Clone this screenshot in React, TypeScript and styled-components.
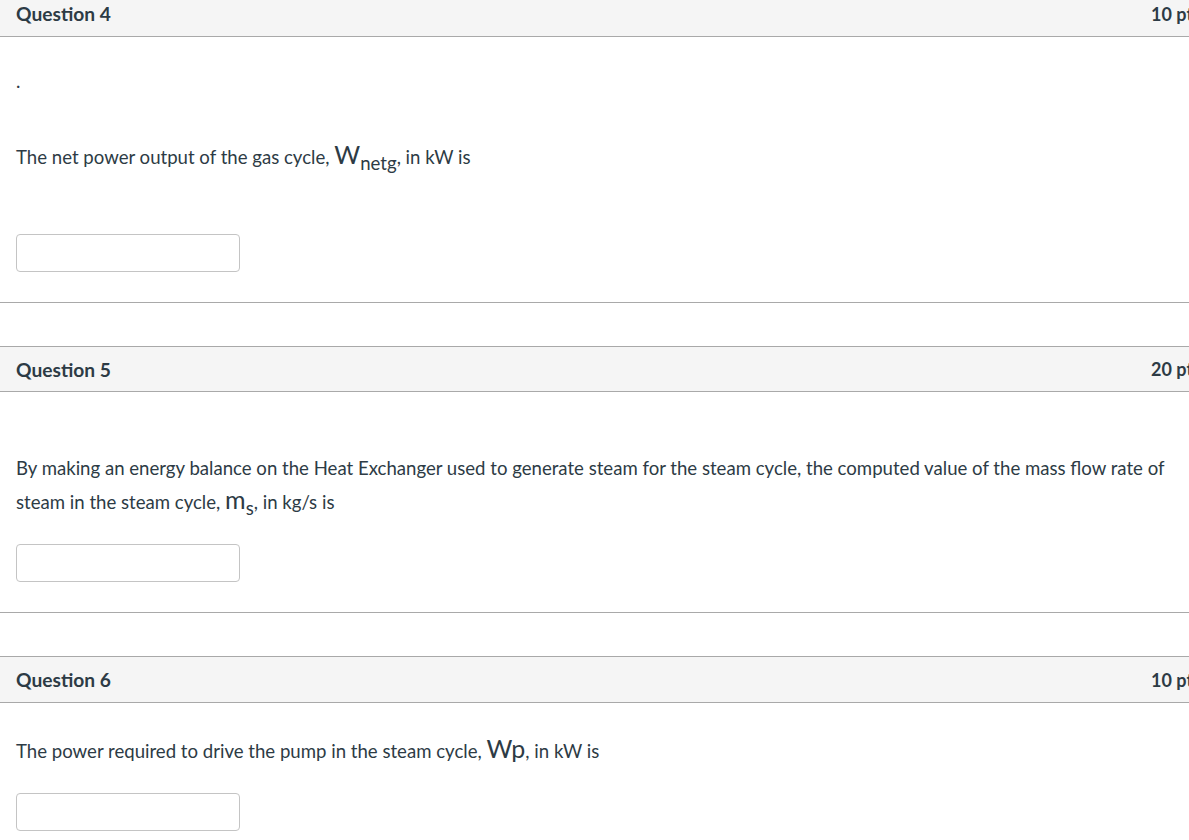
import React from "react";
import styled, { createGlobalStyle } from "styled-components";

const GlobalStyle = createGlobalStyle`
  html, body {
    margin: 0;
    padding: 0;
    background: #ffffff;
    overflow: hidden;
  }
  body {
    font-family: Lato, "Noto Sans", "Liberation Sans", sans-serif;
    color: #2d3b45;
  }
`;

const Page = styled.div`
  width: 1217px;
  margin-top: -10px;
  display: flex;
  flex-direction: column;
  gap: 43px;
`;

const Question = styled.section`
  border-bottom: 1px solid #a9a9a9;
`;

const Header = styled.header<{ $h?: number }>`
  height: ${(p) => p.$h ?? 45}px;
  padding: 0 16px;
  display: flex;
  align-items: center;
  justify-content: space-between;
  background: #f5f5f5;
  border-top: 1px solid #a9a9a9;
  border-bottom: 1px solid #a9a9a9;
  font-weight: 700;
  font-size: 19.2px;
`;

const Title = styled.span``;

const Points = styled.span`
  white-space: nowrap;
  font-size: 18px;
`;

const Body = styled.div`
  padding: 31px 16px 30px;
  display: flex;
  flex-direction: column;
`;

const Para = styled.p<{ $before?: number; $lh?: number }>`
  margin: ${(p) => p.$before ?? 0}px 0 0;
  font-size: 18.6px;
  line-height: ${(p) => p.$lh ?? 34}px;
`;

const MathBig = styled.span`
  font-size: 25px;
  line-height: 0;
`;

const Sub = styled.sub`
  font-size: 18.6px;
  vertical-align: -6px;
  line-height: 0;
`;

const Answer = styled.input`
  box-sizing: border-box;
  width: 224px;
  height: 38px;
  margin-top: 25px;
  border: 1px solid #c4c4c4;
  border-radius: 4px;
  background: #fff;
  padding: 0 8px;
  font-family: inherit;
  font-size: 16px;
`;

export default function App() {
  return (
    <>
      <GlobalStyle />
      <Page>
        <Question>
          <Header>
            <Title>Question 4</Title>
            <Points>10 pts</Points>
          </Header>
          <Body>
            <Para $lh={26}>.</Para>
            <Para $before={46}>
              The net power output of the gas cycle, <MathBig>W</MathBig>
              <Sub>netg</Sub>, in kW is
            </Para>
            <Para $lh={35}>&nbsp;</Para>
            <Answer type="text" />
          </Body>
        </Question>

        <Question>
          <Header $h={44}>
            <Title>Question 5</Title>
            <Points>20 pts</Points>
          </Header>
          <Body>
            <Para $before={28}>
              By making an energy balance on the Heat Exchanger used to generate steam for the steam cycle, the computed value of the mass flow rate of
              steam in the steam cycle, <MathBig>m</MathBig>
              <Sub>s</Sub>, in kg/s is
            </Para>
            <Answer type="text" />
          </Body>
        </Question>

        <Question>
          <Header>
            <Title>Question 6</Title>
            <Points>10 pts</Points>
          </Header>
          <Body>
            <Para>
              The power required to drive the pump in the steam cycle, <MathBig>Wp</MathBig>, in kW is
            </Para>
            <Answer type="text" />
          </Body>
        </Question>
      </Page>
    </>
  );
}
